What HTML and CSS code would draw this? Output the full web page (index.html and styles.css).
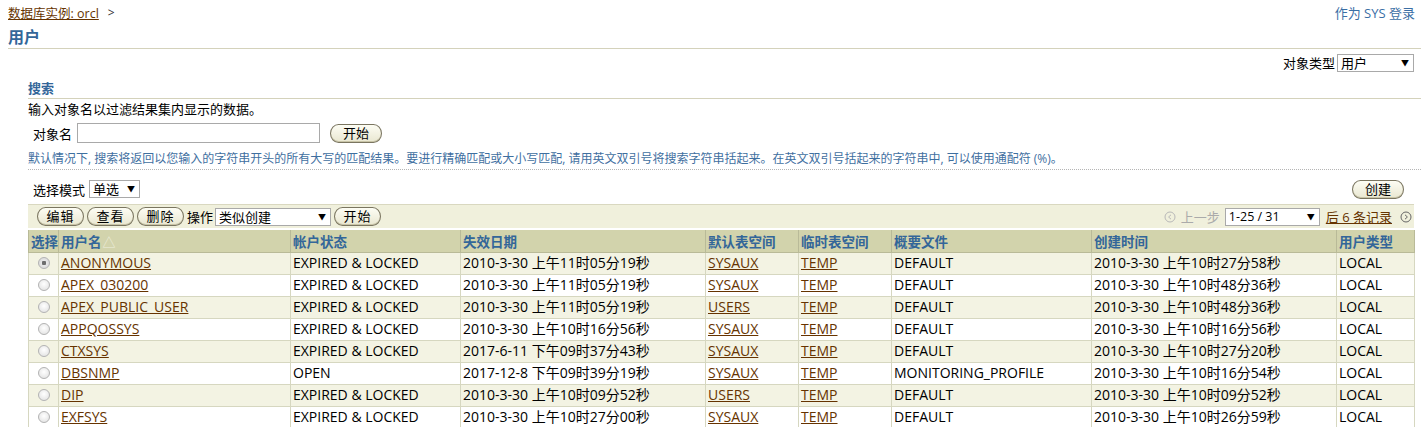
FILE: index.html
```html
<!DOCTYPE html>
<html lang="zh-CN">
<head>
<meta charset="utf-8">
<title>用户</title>
<link rel="stylesheet" href="styles.css">
</head>
<body>
<div class="topbar">
  <div class="crumbs"><a class="crumb" href="#">数据库实例: orcl</a><span class="sep">&gt;</span></div>
  <a class="login" href="#">作为 SYS 登录</a>
</div>
<h1 class="title">用户</h1>
<div class="objtype">
  <span>对象类型</span>
  <div class="sel sel-type"><span>用户</span><span class="arrow">▼</span></div>
</div>
<div class="search">
  <h2 class="subtitle">搜索</h2>
  <div class="intro">输入对象名以过滤结果集内显示的数据。</div>
  <div class="findrow">
    <span class="lbl">对象名</span>
    <div class="input"></div>
    <span class="btn">开始</span>
  </div>
  <div class="hint">默认情况下, 搜索将返回以您输入的字符串开头的所有大写的匹配结果。要进行精确匹配或大小写匹配, 请用英文双引号将搜索字符串括起来。在英文双引号括起来的字符串中, 可以使用通配符 (%)。</div>
</div>
<div class="modebar">
  <div class="mode"><span>选择模式</span><div class="sel sel-mode"><span>单选</span><span class="arrow">▼</span></div></div>
  <span class="btn">创建</span>
</div>
<div class="grid">
  <div class="tools">
    <div class="tools-left">
      <span class="btn tb">编辑</span><span class="btn tb">查看</span><span class="btn tb">删除</span>
      <span class="oplbl">操作</span>
      <div class="sel sel-op"><span>类似创建</span><span class="arrow">▼</span></div>
      <span class="btn tb">开始</span>
    </div>
    <div class="pager">
      <span class="prev"><svg class="circ" viewBox="0 0 12 12" width="12" height="12"><circle cx="6" cy="6" r="5" fill="none" stroke="#b8b8b8" stroke-width="1"/><path d="M7 3.8 L4.6 6 L7 8.2" fill="none" stroke="#b8b8b8" stroke-width="1"/></svg> 上一步</span>
      <div class="sel sel-page"><span>1-25 / 31</span><span class="arrow">▼</span></div>
      <a class="next" href="#">后 6 条记录</a>
      <svg class="circ" viewBox="0 0 12 12" width="12" height="12"><circle cx="6" cy="6" r="5" fill="none" stroke="#666" stroke-width="1"/><path d="M5 3.8 L7.4 6 L5 8.2" fill="none" stroke="#666" stroke-width="1"/></svg>
    </div>
  </div>
  <table class="users">
    <colgroup>
      <col style="width:30px"><col style="width:232px"><col style="width:170px"><col style="width:245px"><col style="width:93px"><col style="width:93px"><col style="width:200px"><col style="width:245px"><col style="width:78px">
    </colgroup>
    <thead>
      <tr><th>选择</th><th>用户名<span class="sort">△</span></th><th>帐户状态</th><th>失效日期</th><th>默认表空间</th><th>临时表空间</th><th>概要文件</th><th>创建时间</th><th>用户类型</th></tr>
    </thead>
    <tbody>
      <tr><td class="rc"><span class="radio on"></span></td><td><a href="#">ANONYMOUS</a></td><td>EXPIRED &amp; LOCKED</td><td>2010-3-30 上午11时05分19秒</td><td><a href="#">SYSAUX</a></td><td><a href="#">TEMP</a></td><td>DEFAULT</td><td>2010-3-30 上午10时27分58秒</td><td>LOCAL</td></tr>
      <tr><td class="rc"><span class="radio"></span></td><td><a href="#">APEX_030200</a></td><td>EXPIRED &amp; LOCKED</td><td>2010-3-30 上午11时05分19秒</td><td><a href="#">SYSAUX</a></td><td><a href="#">TEMP</a></td><td>DEFAULT</td><td>2010-3-30 上午10时48分36秒</td><td>LOCAL</td></tr>
      <tr><td class="rc"><span class="radio"></span></td><td><a href="#">APEX_PUBLIC_USER</a></td><td>EXPIRED &amp; LOCKED</td><td>2010-3-30 上午11时05分19秒</td><td><a href="#">USERS</a></td><td><a href="#">TEMP</a></td><td>DEFAULT</td><td>2010-3-30 上午10时48分36秒</td><td>LOCAL</td></tr>
      <tr><td class="rc"><span class="radio"></span></td><td><a href="#">APPQOSSYS</a></td><td>EXPIRED &amp; LOCKED</td><td>2010-3-30 上午10时16分56秒</td><td><a href="#">SYSAUX</a></td><td><a href="#">TEMP</a></td><td>DEFAULT</td><td>2010-3-30 上午10时16分56秒</td><td>LOCAL</td></tr>
      <tr><td class="rc"><span class="radio"></span></td><td><a href="#">CTXSYS</a></td><td>EXPIRED &amp; LOCKED</td><td>2017-6-11 下午09时37分43秒</td><td><a href="#">SYSAUX</a></td><td><a href="#">TEMP</a></td><td>DEFAULT</td><td>2010-3-30 上午10时27分20秒</td><td>LOCAL</td></tr>
      <tr><td class="rc"><span class="radio"></span></td><td><a href="#">DBSNMP</a></td><td>OPEN</td><td>2017-12-8 下午09时39分19秒</td><td><a href="#">SYSAUX</a></td><td><a href="#">TEMP</a></td><td>MONITORING_PROFILE</td><td>2010-3-30 上午10时16分54秒</td><td>LOCAL</td></tr>
      <tr><td class="rc"><span class="radio"></span></td><td><a href="#">DIP</a></td><td>EXPIRED &amp; LOCKED</td><td>2010-3-30 上午10时09分52秒</td><td><a href="#">USERS</a></td><td><a href="#">TEMP</a></td><td>DEFAULT</td><td>2010-3-30 上午10时09分52秒</td><td>LOCAL</td></tr>
      <tr><td class="rc"><span class="radio"></span></td><td><a href="#">EXFSYS</a></td><td>EXPIRED &amp; LOCKED</td><td>2010-3-30 上午10时27分00秒</td><td><a href="#">SYSAUX</a></td><td><a href="#">TEMP</a></td><td>DEFAULT</td><td>2010-3-30 上午10时26分59秒</td><td>LOCAL</td></tr>
    </tbody>
  </table>
</div>
</body>
</html>
```
FILE: styles.css
```css
* { box-sizing: border-box; }
html, body { margin: 0; padding: 0; background: #fff; }
body {
  font-family: "Open Sans", "Noto Sans CJK SC", sans-serif;
  font-size: 13px;
  color: #000;
  overflow: hidden;
}
a { color: #663300; text-decoration: underline; }

.topbar {
  display: flex;
  justify-content: space-between;
  align-items: center;
  height: 24px;
  padding: 0 6px 0 8px;
}
.crumbs { display: flex; align-items: center; gap: 9px; }
.crumb { color: #663300; font-size: 12.5px; }
.sep { color: #333; font-size: 12px; }
.login { color: #3a6ea5; text-decoration: none; font-size: 13px; }

.title {
  margin: 0 0 0 8px;
  height: 25px;
  font-size: 16px;
  font-weight: bold;
  line-height: 26px;
  color: #336699;
  border-bottom: 1px solid #d4d2bb;
}

.objtype {
  display: flex;
  justify-content: flex-end;
  align-items: center;
  gap: 2px;
  height: 25px;
  padding-right: 7px;
  margin-top: 1px;
}

.sel {
  display: flex;
  align-items: center;
  justify-content: space-between;
  height: 18px;
  border: 1px solid #a9a9a9;
  background: #fff;
  padding: 0 4px 0 3px;
  font-size: 13px;
  line-height: 16px;
}
.sel .arrow { font-size: 8px; color: #000; }
.sel-type { width: 77px; }
.sel-mode { width: 51px; }
.sel-op { width: 116px; }
.sel-page { width: 95px; font-size: 12.5px; }

.search { margin-left: 28px; }
.subtitle {
  margin: 4px 0 0 0;
  height: 20px;
  font-size: 13px;
  font-weight: bold;
  line-height: 18px;
  color: #336699;
  border-bottom: 1px solid #d4d2bb;
}
.intro { height: 21px; line-height: 21px; }
.findrow {
  display: flex;
  align-items: center;
  height: 26px;
  padding-left: 5px;
}
.findrow .lbl { margin-right: 5px; }
.input {
  width: 243px;
  height: 20px;
  border: 1px solid #a9a9a9;
  background: #fff;
  margin-right: 10px;
}

.btn {
  display: inline-flex;
  align-items: center;
  justify-content: center;
  height: 19px;
  padding: 0 12px;
  border: 1px solid #7a7560;
  border-radius: 9px / 10px;
  background: linear-gradient(#fdfdf4, #e9e7d1);
  box-shadow: inset 0 -1px 0 #c9c5a8;
  font-size: 13px;
  color: #000;
  line-height: 17px;
  white-space: nowrap;
}

.hint {
  font-size: 12px;
  color: #3f6f9f;
  height: 24px;
  line-height: 25px;
  border-bottom: 1px dotted #b5b5b5;
  margin-bottom: 9px;
}

.modebar {
  display: flex;
  justify-content: space-between;
  align-items: center;
  height: 20px;
  margin: 0 17px 0 33px;
}
.mode { display: flex; align-items: center; gap: 4px; }

.grid { margin: 5px 7px 0 28px; }
.tools {
  display: flex;
  justify-content: space-between;
  align-items: center;
  height: 24px;
  background: #f0f0dc;
  border-top: 1px solid #d9d8c0;
  padding: 0 2px 0 9px;
}
.tools-left { display: flex; align-items: center; gap: 3px; }
.tools-left .tb { width: 47px; padding: 0; letter-spacing: 1px; }
.oplbl { margin-left: 0; }
.tools-left .sel-op { margin-left: -1px; }
.pager { display: flex; align-items: center; gap: 5px; }
.prev { color: #aaa; display: inline-flex; align-items: center; gap: 5px; }
.next { color: #663300; font-size: 13px; margin-left: 1px; }
.circ { display: block; margin-left: 3px; }

.users {
  width: 100%;
  border-collapse: collapse;
  table-layout: fixed;
  font-size: 14px;
}
.users th {
  background: #d2d3ac;
  color: #336699;
  font-weight: bold;
  text-align: left;
  height: 23px;
  padding: 0 2px;
  border: 1px solid #b9ba98;
  border-top: 2px solid #fff;
  white-space: nowrap;
  font-size: 13.5px;
}
.users th .sort { color: #eeeede; font-weight: normal; margin-left: 1px; font-size: 13px; }
.users td {
  height: 22px;
  padding: 0 2px;
  border: 1px solid #d6d7c0;
  white-space: nowrap;
  line-height: 20px;
}
.users tbody tr:nth-child(odd) td { background: #f3f3e3; }
.users tbody tr:nth-child(even) td { background: #fff; }
.users td.rc { text-align: center; }
.radio {
  display: inline-block;
  width: 12px;
  height: 12px;
  border-radius: 50%;
  border: 1px solid #b3b3b3;
  background: radial-gradient(circle at 50% 40%, #ffffff, #dedede);
  vertical-align: -1px;
}
.radio.on { background: radial-gradient(circle, #6e6e6e 0 2px, #e8e8e8 2.5px, #d3d3d3); }
```
